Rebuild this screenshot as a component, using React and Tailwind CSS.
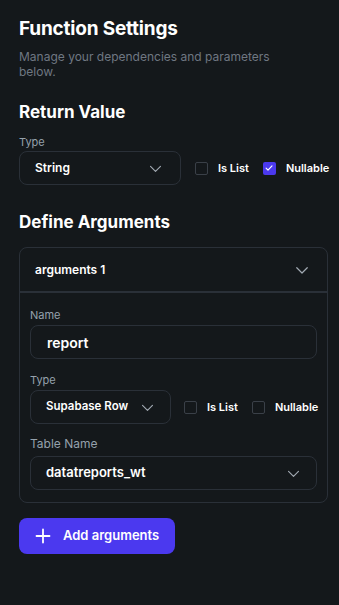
import React from "react";

const Chevron = ({ className = "" }) => (
  <svg viewBox="0 0 24 24" className={className} fill="none" stroke="currentColor" strokeWidth="1.6" strokeLinecap="round" strokeLinejoin="round">
    <path d="M5 9l7 7 7-7" />
  </svg>
);

const Box = ({ checked }) =>
  checked ? (
    <span className="flex h-[13px] w-[13px] shrink-0 items-center justify-center rounded-[2px] bg-[#4b39ef]">
      <svg viewBox="0 0 12 12" className="h-[10px] w-[10px]" fill="none" stroke="white" strokeWidth="1.4" strokeLinecap="round" strokeLinejoin="round">
        <path d="M2.5 6.2l2.3 2.3L9.6 3.5" />
      </svg>
    </span>
  ) : (
    <span className="h-[13px] w-[13px] shrink-0 rounded-[2px] border border-[#3a4048]" />
  );

export default function App() {
  return (
    <div className="min-h-[605px] w-[339px] bg-[#14181b] pl-[19px] pr-[11px] pt-[16px] text-white" style={{ fontFamily: "Inter, 'Noto Sans', sans-serif" }}>
      <h1 className="text-[19px] font-bold leading-[26px] tracking-[-0.2px]">Function Settings</h1>
      <p className="mt-[7px] pr-[40px] text-[12px] leading-[15px] text-[#6f7782]">Manage your dependencies and parameters below.</p>

      <h2 className="mt-[22px] text-[17px] font-bold leading-[22px]">Return Value</h2>
      <div className="mt-[12px] text-[11px] leading-[14px] text-[#95a1ac]">Type</div>
      <div className="mt-[2px] flex items-center whitespace-nowrap">
        <div className="flex h-[34px] w-[162px] shrink-0 items-center justify-between rounded-[8px] border border-[#2a3038] pl-[15px] pr-[16px]">
          <span className="text-[12px] font-semibold">String</span>
          <Chevron className="h-[17px] w-[17px] text-[#a2aab3]" />
        </div>
        <div className="ml-[14px] flex items-center">
          <Box />
          <span className="ml-[10px] text-[11px] font-semibold">Is List</span>
        </div>
        <div className="ml-[14px] flex items-center">
          <Box checked />
          <span className="ml-[10px] text-[11px] font-semibold">Nullable</span>
        </div>
      </div>

      <h2 className="mt-[26px] text-[17px] font-bold leading-[22px]">Define Arguments</h2>

      <div className="mt-[14px] rounded-[8px] border border-[#2a3038]">
        <div className="flex h-[45px] items-center justify-between border-b-2 border-[#2a3038] pl-[15px] pr-[16px]">
          <span className="text-[12px] font-semibold">arguments 1</span>
          <Chevron className="h-[18px] w-[18px] text-[#a2aab3]" />
        </div>
        <div className="px-[10px] pb-[12px] pt-[15px]">
          <div className="text-[11px] leading-[14px] text-[#95a1ac]">Name</div>
          <div className="mt-[3px] flex h-[34px] items-center rounded-[8px] border border-[#2a3038] pl-[16px]">
            <span className="text-[14px] font-semibold">report</span>
          </div>

          <div className="mt-[14px] text-[11px] leading-[14px] text-[#95a1ac]">Type</div>
          <div className="mt-[3px] flex items-center whitespace-nowrap">
            <div className="flex h-[34px] w-[141px] shrink-0 items-center justify-between rounded-[8px] border border-[#2a3038] pl-[15px] pr-[14px]">
              <span className="text-[11.5px] font-semibold">Supabase Row</span>
              <Chevron className="h-[17px] w-[17px] text-[#a2aab3]" />
            </div>
            <div className="ml-[13px] flex items-center">
              <Box />
              <span className="ml-[10px] text-[11px] font-semibold">Is List</span>
            </div>
            <div className="ml-[14px] flex items-center">
              <Box />
              <span className="ml-[10px] text-[11px] font-semibold">Nullable</span>
            </div>
          </div>

          <div className="mt-[12px] text-[12px] leading-[15px] text-[#95a1ac]">Table Name</div>
          <div className="mt-[5px] flex h-[34px] items-center justify-between rounded-[8px] border border-[#2a3038] pl-[15px] pr-[14px]">
            <span className="text-[13px] font-semibold">datatreports_wt</span>
            <Chevron className="h-[17px] w-[17px] text-[#a2aab3]" />
          </div>
        </div>
      </div>

      <button className="mt-[15px] flex h-[36px] w-[156px] items-center rounded-[8px] bg-[#4b39ef] pl-[16px] text-[13px] font-semibold">
        <svg viewBox="0 0 16 16" className="h-[16px] w-[16px]" fill="none" stroke="white" strokeWidth="1.8" strokeLinecap="round">
          <path d="M8 1.5v13M1.5 8h13" />
        </svg>
        <span className="ml-[12px]">Add arguments</span>
      </button>
    </div>
  );
}
